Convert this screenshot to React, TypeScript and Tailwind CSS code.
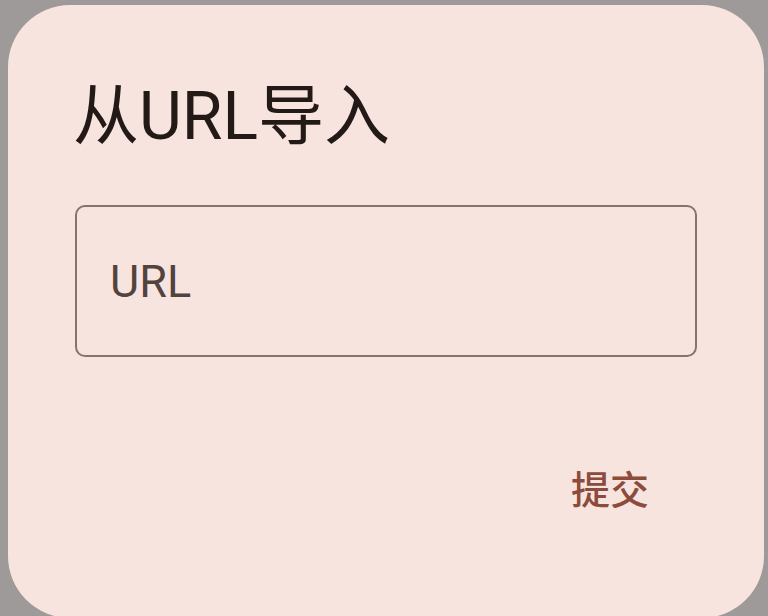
import React from "react";

export default function App() {
  return (
    <div
      className="w-[768px] h-[616px] overflow-hidden bg-[#9e9a99] pt-[5px] pl-[8px]"
      style={{ fontFamily: 'Roboto, "Noto Sans CJK SC", sans-serif' }}
    >
      <div className="w-[756px] h-[613px] rounded-[62px] bg-[#f8e4df] px-[67px] pt-[72px] flex flex-col">
        <h1 className="text-[66px] leading-[80px] text-[#231917] font-normal -ml-[2px]">
          从URL导入
        </h1>
        <div className="mt-[48px] h-[152px] rounded-[10px] border-2 border-[#85736e] flex items-center pl-[33px]">
          <span className="text-[45px] leading-none text-[#53433f]">URL</span>
        </div>
        <div className="mt-[94px] flex justify-end">
          <button className="h-[80px] pr-[48px] pl-[26px] text-[39px] leading-none font-medium text-[#8c4b3b]">
            提交
          </button>
        </div>
      </div>
    </div>
  );
}
